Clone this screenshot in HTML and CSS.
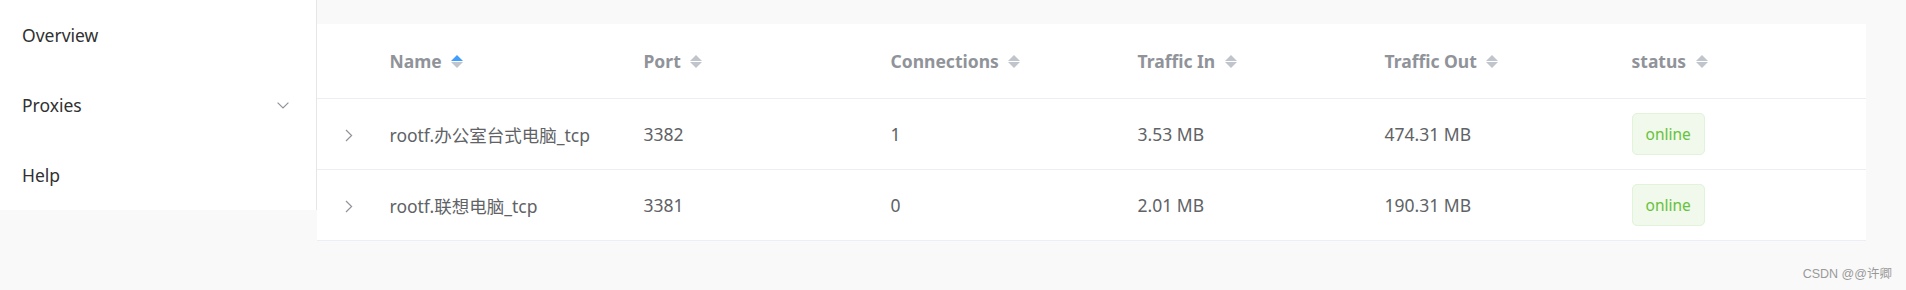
FILE: index.html
```html
<!DOCTYPE html>
<html lang="en">
<head>
<meta charset="UTF-8" />
<meta name="viewport" content="width=device-width, initial-scale=1" />
<title>frps dashboard - Proxies</title>
<link rel="stylesheet" href="styles.css">
</head>
<body>

<div class="layout">
  <aside class="sidebar">
    <ul class="menu">
      <li class="menu-item">Overview</li>
      <li class="menu-item submenu">
        <span>Proxies</span>
        <svg class="arrow-down" width="12" height="7" viewBox="0 0 12 7"><polyline points="0.6,0.6 6,6 11.4,0.6" fill="none" stroke="#909399" stroke-width="1.2"/></svg>
      </li>
      <li class="menu-item">Help</li>
    </ul>
  </aside>

  <main class="content">
    <table class="proxy-table">
      <colgroup>
        <col class="col-expand">
        <col class="col-name">
        <col><col><col><col><col>
      </colgroup>
      <thead>
        <tr>
          <th></th>
          <th>Name <span class="caret"><i class="up active"></i><i class="down"></i></span></th>
          <th>Port <span class="caret"><i class="up"></i><i class="down"></i></span></th>
          <th>Connections <span class="caret"><i class="up"></i><i class="down"></i></span></th>
          <th>Traffic In <span class="caret"><i class="up"></i><i class="down"></i></span></th>
          <th>Traffic Out <span class="caret"><i class="up"></i><i class="down"></i></span></th>
          <th>status <span class="caret"><i class="up"></i><i class="down"></i></span></th>
        </tr>
      </thead>
      <tbody>
        <tr>
          <td class="expand"><svg width="8" height="13" viewBox="0 0 8 13"><polyline points="1,1 6.6,6.5 1,12" fill="none" stroke="#909399" stroke-width="1.2"/></svg></td>
          <td>rootf.办公室台式电脑_tcp</td>
          <td>3382</td>
          <td>1</td>
          <td>3.53 MB</td>
          <td>474.31 MB</td>
          <td><span class="tag">online</span></td>
        </tr>
        <tr>
          <td class="expand"><svg width="8" height="13" viewBox="0 0 8 13"><polyline points="1,1 6.6,6.5 1,12" fill="none" stroke="#909399" stroke-width="1.2"/></svg></td>
          <td>rootf.联想电脑_tcp</td>
          <td>3381</td>
          <td>0</td>
          <td>2.01 MB</td>
          <td>190.31 MB</td>
          <td><span class="tag">online</span></td>
        </tr>
      </tbody>
    </table>
  </main>
</div>

<div class="watermark">CSDN @@许卿</div>

</body>
</html>
```

FILE: styles.css
```css
body {
  margin: 0;
  height: 290px;
  overflow: hidden;
  background: #f9f9f9;
  font-family: "Noto Sans", "Noto Sans CJK SC", sans-serif;
  font-size: 17.5px;
}

.layout {
  display: flex;
  align-items: flex-start;
}

.sidebar {
  width: 316px;
  flex-shrink: 0;
  background: #fff;
  border-right: 1px solid #e6e6e6;
}

.menu {
  list-style: none;
  margin: 0;
  padding: 0;
}

.menu-item {
  height: 70px;
  display: flex;
  align-items: center;
  justify-content: space-between;
  padding: 0 27px 0 22px;
  color: #303133;
}

.content {
  flex: 1;
  padding: 24px 40px 0 0;
}

.proxy-table {
  width: 100%;
  table-layout: fixed;
  border-collapse: collapse;
  background: #fff;
}

.col-expand {
  width: 60px;
}

.col-name {
  width: 254px;
}

.proxy-table th,
.proxy-table td {
  text-align: left;
  padding: 0 12.5px;
  border-bottom: 1px solid #ebeef5;
  white-space: nowrap;
}

.proxy-table th {
  height: 74px;
  color: #909399;
  font-weight: bold;
}

.proxy-table td {
  height: 70px;
  color: #606266;
}

.proxy-table td.expand {
  text-align: center;
  padding: 0;
}

.expand svg {
  display: block;
  margin: 3px auto 0 28px;
}

.caret {
  display: inline-flex;
  flex-direction: column;
  gap: 1.5px;
  vertical-align: middle;
  margin-left: 5px;
  margin-top: -3px;
}

.caret i {
  width: 0;
  height: 0;
  border-left: 6.5px solid transparent;
  border-right: 6.5px solid transparent;
}

.caret .up {
  border-bottom: 6px solid #c0c4cc;
}

.caret .up.active {
  border-bottom-color: #409eff;
}

.caret .down {
  border-top: 6px solid #c0c4cc;
}

.tag {
  display: inline-block;
  height: 40px;
  line-height: 40px;
  padding: 0 13px;
  font-size: 15.5px;
  color: #67c23a;
  background: #f0f9eb;
  border: 1px solid #e1f3d8;
  border-radius: 5px;
}

.watermark {
  position: absolute;
  right: 14px;
  bottom: 8px;
  font-family: "Liberation Sans", "Noto Sans CJK SC", sans-serif;
  font-size: 12.5px;
  color: #999;
}
```
